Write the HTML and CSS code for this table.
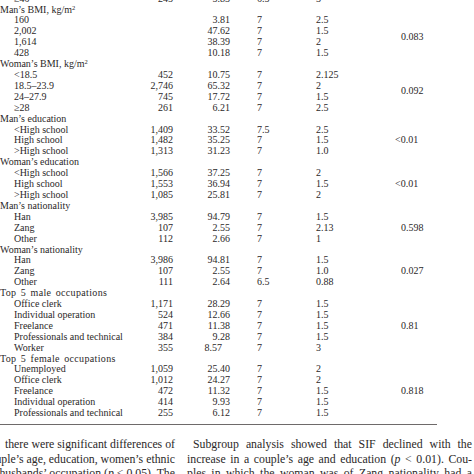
FILE: index.html
```html
<!DOCTYPE html>
<html>
<head>
<meta charset="utf-8">
<link rel="stylesheet" href="styles.css">
</head>
<body>
<div class="tablewrap">
<table class="tbl">
<colgroup>
<col class="c1"><col class="c2"><col class="c3"><col class="c4"><col class="c5"><col class="c6">
</colgroup>
<tbody>
<tr><td class="sub">≥40</td><td class="n">245</td><td class="n">5.83</td><td class="m">6.5</td><td>3</td><td></td></tr>
<tr><td class="head">Man’s BMI, kg/m<sup>2</sup></td><td></td><td></td><td></td><td></td><td></td></tr>
<tr><td class="sub">160</td><td class="n"></td><td class="n">3.81</td><td class="m">7</td><td>2.5</td><td class="p" rowspan="4">0.083</td></tr>
<tr><td class="sub">2,002</td><td class="n"></td><td class="n">47.62</td><td class="m">7</td><td>1.5</td></tr>
<tr><td class="sub">1,614</td><td class="n"></td><td class="n">38.39</td><td class="m">7</td><td>2</td></tr>
<tr><td class="sub">428</td><td class="n"></td><td class="n">10.18</td><td class="m">7</td><td>1.5</td></tr>
<tr><td class="head">Woman’s BMI, kg/m<sup>2</sup></td><td></td><td></td><td></td><td></td><td></td></tr>
<tr><td class="sub">&lt;18.5</td><td class="n">452</td><td class="n">10.75</td><td class="m">7</td><td>2.125</td><td class="p" rowspan="4">0.092</td></tr>
<tr><td class="sub">18.5–23.9</td><td class="n">2,746</td><td class="n">65.32</td><td class="m">7</td><td>2</td></tr>
<tr><td class="sub">24–27.9</td><td class="n">745</td><td class="n">17.72</td><td class="m">7</td><td>1.5</td></tr>
<tr><td class="sub">≥28</td><td class="n">261</td><td class="n">6.21</td><td class="m">7</td><td>2.5</td></tr>
<tr><td class="head">Man’s education</td><td></td><td></td><td></td><td></td><td></td></tr>
<tr><td class="sub">&lt;High school</td><td class="n">1,409</td><td class="n">33.52</td><td class="m">7.5</td><td>2.5</td><td class="p lt" rowspan="3">&lt;0.01</td></tr>
<tr><td class="sub">High school</td><td class="n">1,482</td><td class="n">35.25</td><td class="m">7</td><td>1.5</td></tr>
<tr><td class="sub">&gt;High school</td><td class="n">1,313</td><td class="n">31.23</td><td class="m">7</td><td>1.0</td></tr>
<tr><td class="head">Woman’s education</td><td></td><td></td><td></td><td></td><td></td></tr>
<tr><td class="sub">&lt;High school</td><td class="n">1,566</td><td class="n">37.25</td><td class="m">7</td><td>2</td><td class="p lt" rowspan="3">&lt;0.01</td></tr>
<tr><td class="sub">High school</td><td class="n">1,553</td><td class="n">36.94</td><td class="m">7</td><td>1.5</td></tr>
<tr><td class="sub">&gt;High school</td><td class="n">1,085</td><td class="n">25.81</td><td class="m">7</td><td>2</td></tr>
<tr><td class="head">Man’s nationality</td><td></td><td></td><td></td><td></td><td></td></tr>
<tr><td class="sub">Han</td><td class="n">3,985</td><td class="n">94.79</td><td class="m">7</td><td>1.5</td><td class="p" rowspan="3">0.598</td></tr>
<tr><td class="sub">Zang</td><td class="n">107</td><td class="n">2.55</td><td class="m">7</td><td>2.13</td></tr>
<tr><td class="sub">Other</td><td class="n">112</td><td class="n">2.66</td><td class="m">7</td><td>1</td></tr>
<tr><td class="head">Woman’s nationality</td><td></td><td></td><td></td><td></td><td></td></tr>
<tr><td class="sub">Han</td><td class="n">3,986</td><td class="n">94.81</td><td class="m">7</td><td>1.5</td><td class="p" rowspan="3">0.027</td></tr>
<tr><td class="sub">Zang</td><td class="n">107</td><td class="n">2.55</td><td class="m">7</td><td>1.0</td></tr>
<tr><td class="sub">Other</td><td class="n">111</td><td class="n">2.64</td><td class="m">6.5</td><td>0.88</td></tr>
<tr><td class="head wide">Top 5 male occupations</td><td></td><td></td><td></td><td></td><td></td></tr>
<tr><td class="sub">Office clerk</td><td class="n">1,171</td><td class="n">28.29</td><td class="m">7</td><td>1.5</td><td class="p" rowspan="5">0.81</td></tr>
<tr><td class="sub">Individual operation</td><td class="n">524</td><td class="n">12.66</td><td class="m">7</td><td>1.5</td></tr>
<tr><td class="sub">Freelance</td><td class="n">471</td><td class="n">11.38</td><td class="m">7</td><td>1.5</td></tr>
<tr><td class="sub">Professionals and technical</td><td class="n">384</td><td class="n">9.28</td><td class="m">7</td><td>1.5</td></tr>
<tr><td class="sub">Worker</td><td class="n">355</td><td class="n off">8.57</td><td class="m">7</td><td>3</td></tr>
<tr><td class="head wide">Top 5 female occupations</td><td></td><td></td><td></td><td></td><td></td></tr>
<tr><td class="sub">Unemployed</td><td class="n">1,059</td><td class="n">25.40</td><td class="m">7</td><td>2</td><td class="p" rowspan="5">0.818</td></tr>
<tr><td class="sub">Office clerk</td><td class="n">1,012</td><td class="n">24.27</td><td class="m">7</td><td>2</td></tr>
<tr><td class="sub">Freelance</td><td class="n">472</td><td class="n">11.32</td><td class="m">7</td><td>1.5</td></tr>
<tr><td class="sub">Individual operation</td><td class="n">414</td><td class="n">9.93</td><td class="m">7</td><td>1.5</td></tr>
<tr><td class="sub">Professionals and technical</td><td class="n">255</td><td class="n">6.12</td><td class="m">7</td><td>1.5</td></tr>
</tbody>
</table>
</div>
<div class="text">
<div class="col left">
<span class="ln"><span class="cut">It showed that</span> there were significant differences of</span>
<span class="ln">factors such as couple’s age, education, women’s ethnic</span>
<span class="ln">ity, and husbands’ occupation (<i>p</i> &lt; 0.05). The</span>
</div>
<div class="col right">
<span class="ln first">Subgroup analysis showed that SIF declined with the</span>
<span class="ln">increase in a couple’s age and education (<i>p</i> &lt; 0.01). Cou-</span>
<span class="ln">ples in which the woman was of Zang nationality had a</span>
</div>
</div>
</body>
</html>
```
FILE: styles.css
```css
html, body {
  margin: 0;
  padding: 0;
  background: #ffffff;
}
body {
  width: 474px;
  height: 474px;
  overflow: hidden;
  font-family: "Liberation Serif", "Times New Roman", serif;
  color: #2b2828;
}
.tablewrap {
  width: 437px;
  margin-top: -6.35px;
  padding-bottom: 5px;
  border-bottom: 1px solid #6e6a6a;
}
.tbl {
  table-layout: fixed;
  border-collapse: collapse;
  border-spacing: 0;
  width: 437px;
  font-size: 10px;
}
.c1 { width: 130px; }
.c2 { width: 43px; }
.c3 { width: 57px; }
.c4 { width: 86px; }
.c5 { width: 79px; }
.c6 { width: 42px; }
.tbl td {
  padding: 0;
  height: 10.9px;
  line-height: 10.9px;
  white-space: nowrap;
  vertical-align: middle;
}
.tbl td.head { padding-left: 0; }
.tbl td.wide { word-spacing: 1.5px; letter-spacing: 0.35px; }
.tbl td.sub { padding-left: 14px; }
.tbl td.n { text-align: right; }
.tbl td.off { padding-right: 8px; }
.tbl td.m { padding-left: 27px; }
.tbl td.p { padding-left: 6px; }
.tbl td.lt { padding-left: 0; }
sup {
  font-size: 6.5px;
  line-height: 0;
  vertical-align: 3.5px;
}
.text {
  display: flex;
  column-gap: 12px;
  margin-top: 12px;
  margin-left: -112px;
  font-size: 11.8px;
  line-height: 14.6px;
}
.col {
  flex: none;
  display: flex;
  flex-direction: column;
}
.col.left { width: 287px; }
.col.right { width: 285px; }
.ln {
  display: block;
}
.left .ln {
  white-space: nowrap;
  text-align: right;
}
.left .cut { margin-right: 18px; }
.right .ln {
  text-align: justify;
  text-align-last: justify;
}
.right .ln.first { padding-left: 6px; }
```
